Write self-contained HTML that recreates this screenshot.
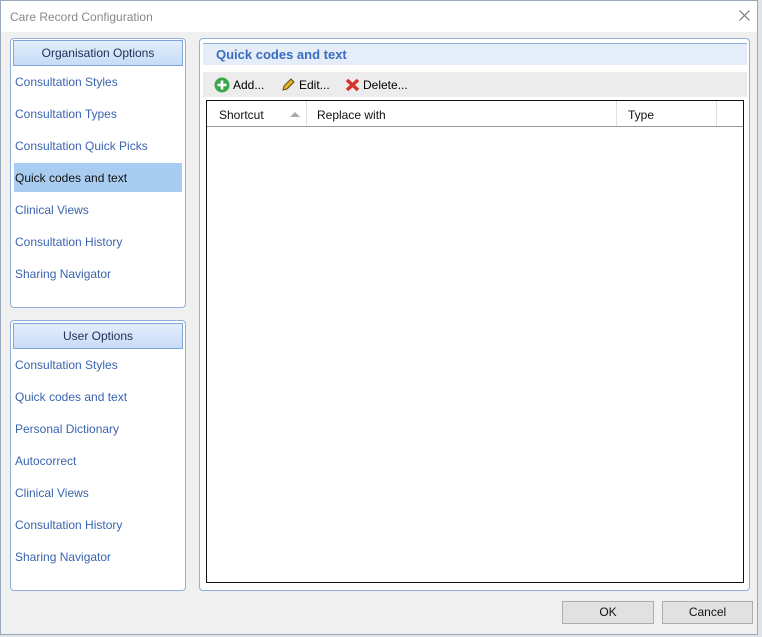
<!DOCTYPE html>
<html><head><style>
body{margin:0;width:762px;height:637px;overflow:hidden;background:#dfe4ea;font-family:"Liberation Sans",sans-serif;font-size:12px;position:relative}
.a{position:absolute;box-sizing:border-box}
.dlg{left:0;top:0;width:758px;height:635px;background:#f0f0f0;border:1px solid #9aa8b8}
.title{left:1px;top:1px;width:756px;height:31px;background:#fff;color:#888;font-size:12px}
.box{border:1px solid #8fb1db;border-radius:4px;background:#fff}
.hdr{background:linear-gradient(#e3eefc,#c8dcf6);border:1px solid #7ea6d8;text-align:center;color:#1e2e55;line-height:24px}
.it{left:15px;color:#3a64b0;font-size:12px}
.sel{background:#a9cdf0}
.btn{background:#e1e1e1;border:1px solid #adadad;text-align:center;line-height:20px;color:#111}
</style></head><body>
<div class="a dlg"></div>
<div class="a title"><span class="a" style="left:9px;top:9px">Care Record Configuration</span>
<svg class="a" style="left:738px;top:9px" width="11" height="11"><path d="M0.5 0.5L10.5 10.5M10.5 0.5L0.5 10.5" stroke="#777" stroke-width="1.2"/></svg></div>

<div class="a box" style="left:10px;top:38px;width:176px;height:270px"></div>
<div class="a hdr" style="left:13px;top:40px;width:170px;height:26px">Organisation Options</div>
<div class="a sel" style="left:14px;top:163px;width:168px;height:29px"></div>
<div class="a it" style="top:75px">Consultation Styles</div>
<div class="a it" style="top:107px">Consultation Types</div>
<div class="a it" style="top:139px">Consultation Quick Picks</div>
<div class="a it" style="top:171px;color:#111">Quick codes and text</div>
<div class="a it" style="top:203px">Clinical Views</div>
<div class="a it" style="top:235px">Consultation History</div>
<div class="a it" style="top:267px">Sharing Navigator</div>

<div class="a box" style="left:10px;top:320px;width:176px;height:271px"></div>
<div class="a hdr" style="left:13px;top:323px;width:170px;height:26px">User Options</div>
<div class="a it" style="top:358px">Consultation Styles</div>
<div class="a it" style="top:390px">Quick codes and text</div>
<div class="a it" style="top:422px">Personal Dictionary</div>
<div class="a it" style="top:454px">Autocorrect</div>
<div class="a it" style="top:486px">Clinical Views</div>
<div class="a it" style="top:518px">Consultation History</div>
<div class="a it" style="top:550px">Sharing Navigator</div>

<div class="a box" style="left:199px;top:38px;width:551px;height:553px"></div>
<div class="a" style="left:203px;top:43px;width:544px;height:22px;background:#e5edf9;border-top:1px solid #8fb1db;color:#3a6cc0;font-weight:bold;font-size:13px;line-height:21px;padding-left:13px">Quick codes and text</div>
<div class="a" style="left:203px;top:72px;width:544px;height:25px;background:#ececec"></div>
<svg class="a" style="left:214px;top:77px" width="16" height="16"><circle cx="8" cy="8" r="7.5" fill="#3aa84a"/><path d="M8 3.5v9M3.5 8h9" stroke="#fff" stroke-width="2.6"/></svg>
<div class="a" style="left:233px;top:78px">Add...</div>
<svg class="a" style="left:281px;top:77px" width="15" height="15"><path d="M2 13l1-4 7-7 3 3-7 7z" fill="#e0b030" stroke="#6a4a10" stroke-width="1"/></svg>
<div class="a" style="left:299px;top:78px">Edit...</div>
<svg class="a" style="left:345px;top:77px" width="15" height="15"><path d="M2 3l11 10M13 3L2 13" stroke="#d8322a" stroke-width="3.5"/></svg>
<div class="a" style="left:363px;top:78px">Delete...</div>

<div class="a" style="left:206px;top:100px;width:538px;height:483px;background:#fff;border:1px solid #111"></div>
<div class="a" style="left:207px;top:101px;width:536px;height:26px;border-bottom:1px solid #999;background:#fff"></div>
<div class="a" style="left:306px;top:101px;width:1px;height:25px;background:#e0e0e0"></div>
<div class="a" style="left:616px;top:101px;width:1px;height:25px;background:#e0e0e0"></div>
<div class="a" style="left:716px;top:101px;width:1px;height:25px;background:#e0e0e0"></div>
<div class="a" style="left:219px;top:108px;color:#111">Shortcut</div>
<svg class="a" style="left:290px;top:111px" width="10" height="6"><path d="M0 6L5 1 10 6z" fill="#aaa"/></svg>
<div class="a" style="left:317px;top:108px;color:#111">Replace with</div>
<div class="a" style="left:628px;top:108px;color:#111">Type</div>

<div class="a btn" style="left:562px;top:601px;width:92px;height:23px">OK</div>
<div class="a btn" style="left:662px;top:601px;width:91px;height:23px">Cancel</div>
</body></html>
